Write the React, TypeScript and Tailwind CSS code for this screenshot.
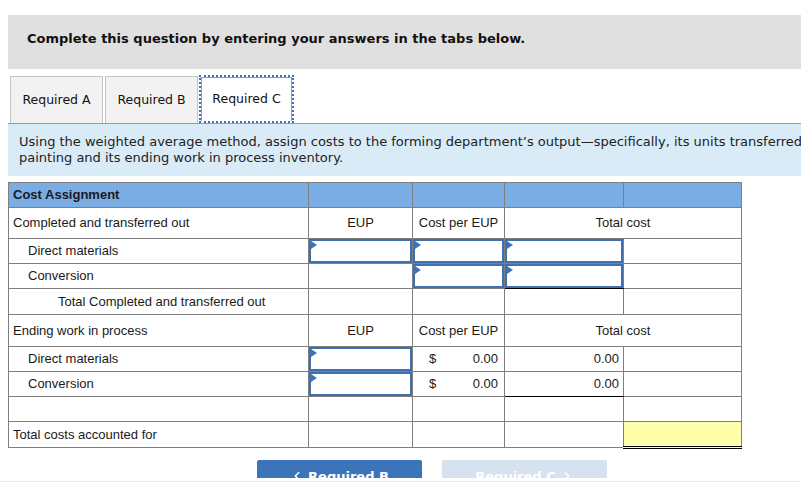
import { ChevronLeft, ChevronRight } from 'lucide-react';

const verdana = { fontFamily: '"DejaVu Sans", Verdana, sans-serif' };

function Tri() {
  return <span className="absolute left-0 top-0 h-0 w-0 border-y-[4px] border-l-[6px] border-y-transparent border-l-[#3d72b8]" />;
}

function Input({ black = false }: { black?: boolean }) {
  return (
    <td className={`border border-[#7f7f7f] p-0 ${black ? 'border-b-black' : ''}`}>
      <div className="relative h-[24px] w-full border-2 border-[#3f6fae]">
        <Tri />
      </div>
    </td>
  );
}

function Cell({ children, className = '' }: { children?: React.ReactNode; className?: string }) {
  return <td className={`border border-[#7f7f7f] px-1 ${className}`}>{children}</td>;
}

function Money({ dollar = false, value }: { dollar?: boolean; value: string }) {
  return (
    <div className="flex items-center justify-between pl-3 pr-0.5">
      <span>{dollar ? '$' : ''}</span>
      <span>{value}</span>
    </div>
  );
}

export default function App() {
  return (
    <div className="h-[483px] w-[801px] overflow-hidden bg-white">
      <div className="w-[840px] pl-[8px] pt-[15px]">
        <div className="h-[54px] bg-[#e0e0e0] pl-[19px] pt-[14px] text-[13px] font-bold text-[#111]" style={verdana}>
          Complete this question by entering your answers in the tabs below.
        </div>

        <div className="mt-[7px] flex h-[47px] items-end pl-[2px] text-[12.5px] text-[#111]" style={verdana}>
          <div className="flex h-[47px] w-[93px] items-center justify-center border border-b-0 border-[#c4c4c4] bg-[#f2f2f2]">Required A</div>
          <div className="ml-[2px] flex h-[47px] w-[93px] items-center justify-center border border-b-0 border-[#c4c4c4] bg-[#f2f2f2]">Required B</div>
          <div className="ml-[1px] h-[48px] w-[95px] border-2 border-dotted border-[#3d72b8] p-0">
            <div className="flex h-full items-center justify-center border border-b-0 border-[#999] bg-white">Required C</div>
          </div>
        </div>

        <div className="border-t border-[#9a9a9a] bg-[#daebf8] pb-[10px] pl-[11px] pt-[10px] text-[13px] leading-[16px] text-[#222]" style={verdana}>
          <div className="whitespace-nowrap">Using the weighted average method, assign costs to the forming department’s output—specifically, its units transferred to</div>
          <div className="whitespace-nowrap">painting and its ending work in process inventory.</div>
        </div>

        <table className="mt-[6px] table-fixed border-collapse text-[13px] text-[#1a1a1a]" style={{ fontFamily: '"Liberation Sans", Arial, sans-serif' }}>
          <colgroup>
            <col className="w-[300px]" />
            <col className="w-[104px]" />
            <col className="w-[92px]" />
            <col className="w-[119px]" />
            <col className="w-[118px]" />
          </colgroup>
          <tbody>
            <tr className="h-[25px] bg-[#7aade3]">
              <Cell className="font-bold">Cost Assignment</Cell>
              <Cell />
              <Cell />
              <Cell />
              <Cell />
            </tr>
            <tr className="h-[31px]">
              <Cell>Completed and transferred out</Cell>
              <Cell className="text-center">EUP</Cell>
              <Cell className="text-center">Cost per EUP</Cell>
              <td colSpan={2} className="border border-[#7f7f7f] text-center">Total cost</td>
            </tr>
            <tr className="h-[25px]">
              <Cell className="pl-[19px]">Direct materials</Cell>
              <Input />
              <Input />
              <Input />
              <Cell />
            </tr>
            <tr className="h-[25px]">
              <Cell className="pl-[19px]">Conversion</Cell>
              <Cell />
              <Input />
              <Input black />
              <Cell />
            </tr>
            <tr className="h-[26px]">
              <Cell className="pl-[49px]">Total Completed and transferred out</Cell>
              <Cell />
              <Cell />
              <Cell />
              <Cell />
            </tr>
            <tr className="h-[32px]">
              <Cell>Ending work in process</Cell>
              <Cell className="text-center">EUP</Cell>
              <Cell className="text-center">Cost per EUP</Cell>
              <td colSpan={2} className="border border-[#7f7f7f] text-center">Total cost</td>
            </tr>
            <tr className="h-[25px]">
              <Cell className="pl-[19px]">Direct materials</Cell>
              <Input />
              <Cell><Money dollar value="0.00" /></Cell>
              <Cell className="text-right">0.00</Cell>
              <Cell />
            </tr>
            <tr className="h-[25px]">
              <Cell className="pl-[19px]">Conversion</Cell>
              <Input />
              <Cell><Money dollar value="0.00" /></Cell>
              <Cell className="border-b-black text-right">0.00</Cell>
              <Cell />
            </tr>
            <tr className="h-[25px]">
              <Cell />
              <Cell />
              <Cell />
              <Cell />
              <Cell />
            </tr>
            <tr className="h-[26px]">
              <Cell>Total costs accounted for</Cell>
              <Cell />
              <Cell />
              <Cell />
              <td className="border border-[#7f7f7f] border-t-black border-b-[3px] border-b-black bg-[#ffffaa] [border-bottom-style:double]" />
            </tr>
          </tbody>
        </table>

        <div className="mt-[11px] flex h-[18px] gap-[20px] overflow-hidden pl-[249px]" style={verdana}>
          <div className="flex h-[30px] w-[165px] items-start justify-center gap-1 rounded-t-[2px] bg-[#3b74b9] pt-[7px] text-[13px] font-bold text-white">
            <ChevronLeft size={14} strokeWidth={2.5} className="mt-[2px]" />
            Required B
          </div>
          <div className="flex h-[30px] w-[165px] items-start justify-center gap-1 rounded-t-[2px] bg-[#d6e2f0] pt-[7px] text-[13px] font-bold text-white">
            Required C
            <ChevronRight size={14} strokeWidth={2.5} className="mt-[2px]" />
          </div>
        </div>
      </div>
      <div className="mt-[3px] h-px w-full bg-[#ececec]" />
    </div>
  );
}
